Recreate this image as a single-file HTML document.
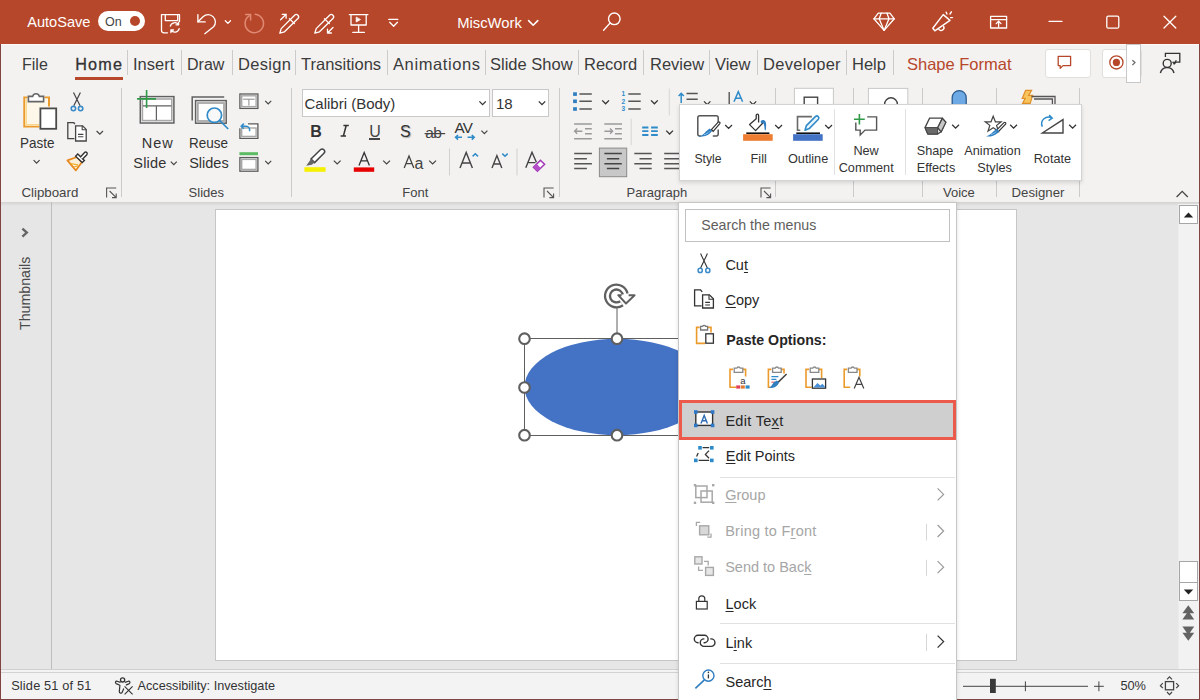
<!DOCTYPE html>
<html><head><meta charset="utf-8">
<style>
*{box-sizing:border-box;margin:0;padding:0}
html,body{width:1200px;height:700px;overflow:hidden;background:#E6E6E6;font-family:"Liberation Sans",sans-serif;position:relative}
.a{position:absolute}
.t{position:absolute;line-height:1;white-space:nowrap}
svg{position:absolute;overflow:visible}
#title{left:0;top:0;width:1200px;height:44px;background:#B7472A}
#tabs{left:0;top:44px;width:1200px;height:158px;background:#F3F2F1}
.tab{color:#3B3B3B;font-size:16px}
.sep{position:absolute;width:1px;background:#CBCBCB}
.lbl{color:#444;font-size:13px}
.rl{color:#333;font-size:13px}
.ml{color:#333;font-size:12.7px}
.mi{color:#262626;font-size:14.5px}
.dis{color:#A6A6A6}
u{text-decoration:underline;text-decoration-thickness:1px;text-underline-offset:2px}
</style></head><body>
<!-- title bar -->
<div id="title" class="a"></div>
<div class="t" style="left:27.2px;top:14.7px;font-size:14.6px;color:#fff">AutoSave</div>
<div class="a" style="left:98px;top:11px;width:47px;height:20px;border-radius:10px;background:#fff"></div>
<div class="t" style="left:105px;top:15.5px;font-size:12.5px;color:#444">On</div>
<div class="a" style="left:130px;top:16px;width:10px;height:10px;border-radius:5px;background:#B7472A"></div>

<svg width="1200" height="44" style="left:0;top:0" fill="none" stroke="#fff" stroke-width="1.3" stroke-linecap="round" stroke-linejoin="round">
 <!-- save -->
 <path d="M167.5 32.8H164a2.5 2.5 0 0 1-2.5-2.5V14.6h18v7"/>
 <path d="M165.3 14.6v6h12.4v-6"/>
 <path d="M170.3 26.2a4.6 4.6 0 0 1 8.2-1.6M178.6 22.2v2.6h-2.6M179.2 28.6a4.6 4.6 0 0 1-8.2 1.6M170.9 32.6V30h2.6"/>
 <!-- undo -->
 <path d="M197.9 14.6v7.3h7.3"/>
 <path d="M198 21.8l5.3-5.3a7.3 7.3 0 0 1 10.3 10.3l-8.8 6.9" />
 <path d="M225.3 20.8l2.6 2.6 2.6-2.6"/>
 <!-- redo faded -->
 <g stroke="#E08A74" stroke-width="1.5">
  <path d="M249.2 15.8a9.2 9.2 0 1 0 6-1.5"/>
  <path d="M245.6 14.6h5v5.3"/>
 </g>
 <!-- pen1 -->
 <path d="M279.8 33.2l1.4-4.6 13.4-13.4a2.3 2.3 0 0 1 3.3 3.3L284.5 31.8z"/>
 <path d="M289.4 18.6l5 5"/>
 <path d="M280.6 19.8l5.5-5.5M282.2 14.3h3.9v3.9"/>
 <!-- pen2 -->
 <path d="M314.8 33.2l1.4-4.6 13.4-13.4a2.3 2.3 0 0 1 3.3 3.3L319.5 31.8z"/>
 <path d="M324.4 18.6l5 5"/>
 <path d="M333 27.5l-5.5 5.5M327.5 29.1v3.9h3.9"/>
 <!-- present -->
 <path d="M349.3 14.6h18.6M351 14.6v10.4h15.2V14.6M358.6 25v7M352.8 32.4h11.6"/>
 <path d="M356.2 17.4v4.6l4-2.3z" fill="#fff" stroke-width="0.8"/>
 <!-- customize -->
 <path d="M388.8 19.4h9M389.7 22.3l3.9 3.9 3.9-3.9"/>
 <!-- misc chevron -->
 <path d="M528.6 20.6l4.6 4.6 4.6-4.6" stroke-width="1.6"/>
 <!-- search -->
 <circle cx="614.3" cy="18.8" r="5.8" stroke-width="1.4"/>
 <path d="M610.2 22.9l-6.6 7.4" stroke-width="1.4"/>
 <!-- diamond -->
 <path d="M878.3 13.2h11.6l4.4 5.6-10.2 11.6-10.2-11.6z"/>
 <path d="M873.9 18.8h20.4M881.2 13.2l-2 5.6 4.9 11.6 4.9-11.6-2-5.6"/>
 <!-- megaphone -->
 <path d="M932.8 28.2l10.4-13.6 6.8 5.8-15.2 10.4z" stroke-width="1.4"/>
 <path d="M938.6 29a2.7 2.7 0 0 0 5-2.6" stroke-width="1.4"/>
 <path d="M946.2 12.2l0.7 1.8M951.4 11.8l-1.4 2.2M950.6 17.6h1.9" stroke-width="1.4"/>
 <!-- ribbon display -->
 <rect x="990.6" y="16.4" width="16" height="11.6"/>
 <path d="M990.6 19.6h16M998.6 27v-5.6M996.2 23.6l2.4-2.4 2.4 2.4"/>
 <!-- min max close -->
 <path d="M1049 21.3h13"/>
 <rect x="1106.8" y="16.2" width="12" height="12" rx="1.5"/>
 <path d="M1164 16.2l11.8 11.8M1175.8 16.2l-11.8 11.8"/>
</svg>
<div class="t" style="left:457.2px;top:16.2px;font-size:14.8px;color:#fff">MiscWork</div>

<!-- tabs + ribbon -->
<div id="tabs" class="a"></div>
<div class="a" style="left:0;top:44px;width:1200px;height:1px;background:#FAFAFA"></div>
<div class="t tab" style="left:22px;top:56.5px">File</div>
<div class="t tab" style="left:75.2px;top:55.8px;color:#333;font-size:16.2px;letter-spacing:1.2px;-webkit-text-stroke:0.3px #333">Home</div>
<div class="a" style="left:75px;top:77px;width:48px;height:3px;background:#B7472A"></div>
<div class="t tab" style="left:133px;top:55.7px;font-size:16.5px">Insert</div>
<div class="t tab" style="left:187px;top:56.5px">Draw</div>
<div class="t tab" style="left:238px;top:55.7px;font-size:16.5px;letter-spacing:0.3px">Design</div>
<div class="t tab" style="left:301px;top:55.7px;font-size:16.5px">Transitions</div>
<div class="t tab" style="left:393px;top:55.7px;font-size:16.5px;letter-spacing:0.6px">Animations</div>
<div class="t tab" style="left:490px;top:55.7px;font-size:16.5px">Slide Show</div>
<div class="t tab" style="left:584px;top:55.7px;font-size:16.5px">Record</div>
<div class="t tab" style="left:650px;top:55.7px;font-size:16.5px">Review</div>
<div class="t tab" style="left:715px;top:55.7px;font-size:16.5px">View</div>
<div class="t tab" style="left:763px;top:55.7px;font-size:16.5px;letter-spacing:0.3px">Developer</div>
<div class="t tab" style="left:852px;top:55.7px;font-size:16.5px">Help</div>
<div class="t tab" style="left:907px;top:55.7px;font-size:16.5px;color:#B7472A">Shape Format</div>
<div class="sep" style="left:127px;top:50px;height:25px"></div>
<div class="sep" style="left:181px;top:50px;height:25px"></div>
<div class="sep" style="left:232px;top:50px;height:25px"></div>
<div class="sep" style="left:295px;top:50px;height:25px"></div>
<div class="sep" style="left:387px;top:50px;height:25px"></div>
<div class="sep" style="left:485px;top:50px;height:25px"></div>
<div class="sep" style="left:578px;top:50px;height:25px"></div>
<div class="sep" style="left:643px;top:50px;height:25px"></div>
<div class="sep" style="left:709px;top:50px;height:25px"></div>
<div class="sep" style="left:757px;top:50px;height:25px"></div>
<div class="sep" style="left:846px;top:50px;height:25px"></div>
<div class="sep" style="left:893px;top:50px;height:25px"></div>


<div class="a" style="left:1044.5px;top:48.5px;width:46px;height:29px;background:#fff;border:1px solid #E1DFDD;border-radius:3px"></div>
<div class="a" style="left:1101.5px;top:48.5px;width:40px;height:29px;background:#fff;border:1px solid #E1DFDD;border-radius:3px"></div>
<div class="a" style="left:1126.3px;top:44px;width:15px;height:38.5px;background:#fff;border:1px solid #C8C8C8"></div>
<svg width="1200" height="700" style="left:0;top:0" fill="none">
 <path d="M1058.2 56.4h12.4v9.2h-7.6l-2.8 2.8v-2.8h-2z" stroke="#B7472A" stroke-width="1.3" stroke-linejoin="round"/>
 <circle cx="1116.4" cy="62.4" r="6.6" stroke="#B7472A" stroke-width="1.3"/>
 <circle cx="1116.4" cy="62.4" r="3.6" fill="#B7472A"/>
 <path d="M1132.4 60.2l2.6 2.4-2.6 2.4" stroke="#666" stroke-width="1.2"/>
 <circle cx="1167.2" cy="63.4" r="4" stroke="#333" stroke-width="1.4"/>
 <path d="M1160.4 73a7 7 0 0 1 13.6 0" stroke="#333" stroke-width="1.4"/>
 <path d="M1165.4 57v-3.6h14.4v8.8h-4l-2 2.2" stroke="#333" stroke-width="1.3"/>
 <path d="M1172.6 61.8l1.4 1.6 2.4-3" stroke="#333" stroke-width="1.3"/>
</svg>
<!-- ribbon group labels -->
<div class="t lbl" style="left:21.4px;top:185.5px;font-size:13.3px">Clipboard</div>
<div class="t lbl" style="left:188.6px;top:185.5px">Slides</div>
<div class="t lbl" style="left:402.3px;top:185.5px">Font</div>
<div class="t lbl" style="left:626.5px;top:185.5px">Paragraph</div>
<div class="t lbl" style="left:943px;top:185.5px">Voice</div>
<div class="t lbl" style="left:1011.6px;top:185.5px;font-size:13.2px">Designer</div>
<div class="sep" style="left:121px;top:88px;height:109px"></div>
<div class="sep" style="left:290.5px;top:88px;height:109px"></div>
<div class="sep" style="left:558.5px;top:88px;height:109px"></div>
<div class="sep" style="left:775px;top:88px;height:109px"></div>
<div class="sep" style="left:852.5px;top:88px;height:109px"></div>
<div class="sep" style="left:922px;top:88px;height:109px"></div>
<div class="sep" style="left:995.5px;top:88px;height:109px"></div>
<div class="sep" style="left:1079px;top:88px;height:109px"></div>

<div class="t rl" style="left:20.4px;top:136.3px;font-size:14.5px;transform-origin:0 0;transform:scaleX(0.93)">Paste</div>
<div class="t rl" style="left:141.8px;top:136.3px;font-size:14.5px;letter-spacing:0.9px">New</div>
<div class="t rl" style="left:133.3px;top:156.4px;font-size:14.5px;letter-spacing:0.2px">Slide</div>
<div class="t rl" style="left:189.3px;top:136.3px;font-size:14.5px;transform-origin:0 0;transform:scaleX(0.93)">Reuse</div>
<div class="t rl" style="left:189.2px;top:156.4px;font-size:14.5px">Slides</div>


<!-- font boxes -->
<div class="a" style="left:301.5px;top:88.5px;width:188px;height:28px;background:#fff;border:1px solid #C8C8C8"></div>
<div class="t" style="left:304.5px;top:95.5px;font-size:15px;color:#333">Calibri (Body)</div>
<div class="a" style="left:492px;top:88.5px;width:57px;height:28px;background:#fff;border:1px solid #C8C8C8"></div>
<div class="t" style="left:496px;top:95.5px;font-size:15px;color:#333">18</div>

<svg width="1200" height="700" style="left:0;top:0" fill="none" stroke-linecap="butt" stroke-linejoin="miter">
 <!-- paste -->
 <path d="M27.5 97.5h-3.2v29h15" stroke="#EB9A2C" stroke-width="2" fill="#FDF3DC"/>
 <path d="M44.5 97.5h4.5v9" stroke="#EB9A2C" stroke-width="2"/>
 <path d="M25.4 98.5h22.6v8H39.5v19H25.4z" fill="#FDF7EA"/>
 <path d="M26.2 99v25.6h13" stroke="#FAD68A" stroke-width="1.4"/>
 <path d="M28.4 101.6v-5.2h4.3a3.4 3.4 0 0 1 6.6 0h4.3v5.2z" stroke="#666" stroke-width="1.6" fill="#fff"/>
 <rect x="40.4" y="108.4" width="15.8" height="20.4" stroke="#4A4A4A" stroke-width="1.8" fill="#fff"/>
 <path d="M33.6 160.2l3 3 3-3" stroke="#444" stroke-width="1.2"/>
 <!-- scissors -->
 <path d="M73.5 92.4l6.6 13.4M80.4 92.4l-6.6 13.4" stroke="#444" stroke-width="1.2"/>
 <circle cx="73.4" cy="108.6" r="2.2" stroke="#3B8BC8" stroke-width="1.6"/>
 <circle cx="80.6" cy="108.6" r="2.2" stroke="#3B8BC8" stroke-width="1.6"/>
 <!-- copy -->
 <path d="M74.4 138.6h-6.6v-16h6l1 1.6" stroke="#444" stroke-width="1.3"/>
 <path d="M75.6 125.8h7l3.6 3.6v11.6H75.6z" stroke="#444" stroke-width="1.3" fill="#fff"/>
 <path d="M82.2 125.8v4h4M78 134.4h5.4M78 136.8h5.4" stroke="#444" stroke-width="1.1"/>
 <path d="M96.6 131l3.2 3.2 3.2-3.2" stroke="#444" stroke-width="1.2"/>
 <!-- format painter -->
 <path d="M67.4 160.4l9.6-3.4 4.8 5.2-6 8.2z" stroke="#E8891E" stroke-width="1.7" stroke-linejoin="round" fill="#FDF0DA"/>
 <path d="M71 163.6l7 1.2M73.4 167l4.6-1" stroke="#F0B030" stroke-width="1.2"/>
 <path d="M75.6 156.2l2.2-2.2 6.6 6.4-2.2 2.2z" stroke="#333" stroke-width="1.4" fill="#fff"/>
 <path d="M80.2 157.2l4.4-4.6a1.5 1.5 0 0 1 2.2 2.1l-4.4 4.6" stroke="#333" stroke-width="1.4" fill="#fff"/>
 <!-- new slide -->
 <rect x="140.3" y="96.6" width="33.6" height="26.4" stroke="#606060" stroke-width="1.5" fill="#fff"/>
 <rect x="142.4" y="99" width="29.4" height="21.6" stroke="#A8A8A8" stroke-width="1.6"/>
 <path d="M143 105.8h28.4M156.4 105.8v14.4" stroke="#606060" stroke-width="1.2"/>
 <path d="M137 98.9h19M146.6 90v18" stroke="#2F9A47" stroke-width="1.6"/>
 <!-- reuse slides -->
 <path d="M192.2 120.6V97h32" stroke="#606060" stroke-width="1.5"/>
 <rect x="195.6" y="100.6" width="30.6" height="22.6" stroke="#606060" stroke-width="1.5" fill="#fff"/>
 <rect x="197.8" y="103" width="26.2" height="18" stroke="#A8A8A8" stroke-width="1.8"/>
 <circle cx="214.4" cy="115.2" r="7.2" stroke="#2F8BC9" stroke-width="1.7" fill="#F8F8F8"/>
 <path d="M219.6 120.4l8.6 8.6" stroke="#2F8BC9" stroke-width="1.7"/>
 <!-- layout -->
 <rect x="239.9" y="94" width="18" height="14.4" stroke="#5A5A5A" stroke-width="1.3" fill="#fff"/>
 <rect x="241.7" y="95.8" width="14.4" height="10.8" stroke="#A8A8A8" stroke-width="1.4"/>
 <path d="M243.2 99.2h11.4M248.9 99.2v6.4" stroke="#8A8A8A" stroke-width="1"/>
 <path d="M265.2 100.8l3 3 3-3" stroke="#444" stroke-width="1.2"/>
 <!-- reset -->
 <path d="M248 123.9h9.9v14.4H239.9v-10" stroke="#5A5A5A" stroke-width="1.3" fill="#fff"/>
 <rect x="241.7" y="128" width="14.4" height="8.4" stroke="#A8A8A8" stroke-width="1.4"/>
 <path d="M249.6 131.2v-1.4a3.6 3.6 0 0 0-3.6-3.6h-4.6M243.8 123.6l-2.6 2.6 2.6 2.6" stroke="#2F8BC9" stroke-width="1.5"/>
 <!-- section -->
 <path d="M239.4 153.7h18.6" stroke="#5DBB63" stroke-width="3"/>
 <rect x="239.9" y="157.6" width="18" height="13.6" stroke="#5A5A5A" stroke-width="1.3" fill="#fff"/>
 <rect x="241.7" y="159.4" width="14.4" height="10" stroke="#A8A8A8" stroke-width="1.4"/>
 <path d="M265.2 160.8l3 3 3-3" stroke="#444" stroke-width="1.2"/>
 <!-- slide chevron -->
 <path d="M170.8 161.6l3 3 3-3" stroke="#444" stroke-width="1.2"/>

 <!-- font box chevrons -->
 <path d="M479.4 101.4l3.2 3.2 3.2-3.2M538.8 101.4l3.2 3.2 3.2-3.2" stroke="#333" stroke-width="1.3"/>
 <!-- ab strike -->
 <path d="M424.6 133.6h20.6" stroke="#444" stroke-width="1.2"/>
 <!-- AV arrows -->
 <path d="M455.6 137.3h6.4M458 135l-2.4 2.3 2.4 2.3M467.6 137.3h6.6M471.8 135l2.4 2.3-2.4 2.3" stroke="#2F8BC9" stroke-width="1.6"/>
 <path d="M481.4 130.6l3 3 3-3" stroke="#444" stroke-width="1.2"/>
 <!-- highlighter -->
 <path d="M304.4 167.2h21.2v4.6h-21.2z" fill="#F5F000"/>
 <path d="M314.6 162.6l-3.6-3.6 9.4-9.2a2.4 2.4 0 0 1 3.5 3.5z" stroke="#444" stroke-width="1.5" fill="#fff"/>
 <path d="M311 159l3.6 3.6-2.8 2.2-5.6 1z" fill="#666"/>
 <path d="M333.8 160.6l3.4 3.4 3.4-3.4" stroke="#444" stroke-width="1.2"/>
 <!-- font color -->
 <path d="M359 165.6l5.2-13.2 5.2 13.2M360.9 160.8h6.6" stroke="#333" stroke-width="1.3"/>
 <path d="M353.8 167.4h20.4v4.4h-20.4z" fill="#E60000"/>
 <path d="M383.2 160.6l3.4 3.4 3.4-3.4" stroke="#444" stroke-width="1.2"/>
 <!-- Aa -->
 <path d="M404.2 168l4.8-12 4.8 12M405.9 163.6h6.2" stroke="#444" stroke-width="1.3"/>
 <path d="M429.2 160.6l3.4 3.4 3.4-3.4" stroke="#444" stroke-width="1.2"/>
 <path d="M449.5 148.5v27M517 148.5v27" stroke="#D0D0D0" stroke-width="1"/>
 <!-- grow -->
 <path d="M460 168l6.2-15.6 6.2 15.6M462.2 163h8" stroke="#444" stroke-width="1.4"/>
 <path d="M472.6 156.4l2.7-2.7 2.7 2.7" stroke="#2F8BC9" stroke-width="1.5"/>
 <!-- shrink -->
 <path d="M492 168l4.9-12.4 4.9 12.4M493.8 164h6.2" stroke="#444" stroke-width="1.4"/>
 <path d="M502.3 153.6l2.7 2.7 2.7-2.7" stroke="#2F8BC9" stroke-width="1.5"/>
 <!-- clear formatting -->
 <path d="M525.8 167.8l6.2-15.6 4.4 10M528 162.6h7.4" stroke="#444" stroke-width="1.4"/>
 <path d="M533.4 167.2l7-6.8 4.2 3.8-7.2 7z" stroke="#A23BB8" stroke-width="1.5" fill="#fff"/>
 <path d="M533.4 167.2l3.4-3.3 3.9 4-3.3 3.3z" fill="#B44DC8"/>
 <!-- dialog launchers -->
 <path d="M106.6 197.6v-9.6h9.6M109.6 191l6.6 6.6M112 197.6h4.2v-4.2" stroke="#555" stroke-width="1.1"/>
 <path d="M544 197.6v-9.6h9.6M547 191l6.6 6.6M549.4 197.6h4.2v-4.2" stroke="#555" stroke-width="1.1"/>
 <path d="M761 197.6v-9.6h9.6M764 191l6.6 6.6M766.4 197.6h4.2v-4.2" stroke="#555" stroke-width="1.1"/>
 <!-- collapse ribbon -->
 <path d="M1176.6 197l5.6-5.6 5.6 5.6" stroke="#444" stroke-width="1.3"/>
</svg>
<div class="t" style="left:310.2px;top:124.2px;font-size:16px;font-weight:bold;color:#333">B</div>
<svg width="1200" height="700" style="left:0;top:0" fill="none"><path d="M343.4 125.5h5.4M340.6 136h5.4M346.2 125.5l-2.8 10.5" stroke="#333" stroke-width="1.5"/></svg>
<div class="t" style="left:369.2px;top:124.2px;font-size:16px;color:#444">U</div>
<div class="a" style="left:368.5px;top:138px;width:11.5px;height:1.5px;background:#444"></div>
<div class="t" style="left:400px;top:124.4px;font-size:16px;color:#333;text-shadow:1px 1px 1px #AAA">S</div>
<div class="t" style="left:425.2px;top:124.6px;font-size:15.5px;color:#444;letter-spacing:-0.6px">ab</div>
<div class="t" style="left:454.4px;top:120.2px;font-size:15.2px;color:#333;letter-spacing:-0.6px">AV</div>
<div class="t" style="left:414.6px;top:155.8px;font-size:16px;color:#444">a</div>


<svg width="1200" height="700" style="left:0;top:0" fill="none">
 <!-- bullets -->
 <g fill="#2F7EC0"><rect x="573.1" y="92.3" width="3.8" height="3.6"/><rect x="573.1" y="99.5" width="3.8" height="3.6"/><rect x="573.1" y="107.2" width="3.8" height="3.6"/></g>
 <path d="M579.4 94h12.4M579.4 101.2h12.4M579.4 108.9h12.4" stroke="#555" stroke-width="1.5"/>
 <path d="M602.2 100.4l3.4 3.4 3.4-3.4M651 100.4l3.4 3.4 3.4-3.4" stroke="#333" stroke-width="1.3"/>
 <path d="M628.3 94h12.4M628.3 101.2h12.4M628.3 108.9h12.4" stroke="#555" stroke-width="1.5"/>
 <path d="M669.3 88.5v27M631.2 118.7v26.5" stroke="#D6D6D6"/>
 <!-- indents -->
 <path d="M574.1 124h17.7M585 128.7h6.8M585 133.8h6.8M574.1 138.8h17.7M574.4 131.2h8M577.2 128.6l-2.6 2.6 2.6 2.6" stroke="#9A9A9A" stroke-width="1.4"/>
 <path d="M604.3 124h17.7M615 128.7h6.8M615 133.8h6.8M604.3 138.8h17.7M604.4 131.2h8M610 128.6l2.6 2.6-2.6 2.6" stroke="#9A9A9A" stroke-width="1.4"/>
 <!-- columns -->
 <path d="M642.2 127.5h6.2M651.1 127.5h6.7M642.2 131.2h6.2M651.1 131.2h6.7M642.2 135h6.2M651.1 135h6.7" stroke="#2F8BC9" stroke-width="1.8"/>
 <path d="M666.2 130.6l3.4 3.4 3.4-3.4" stroke="#333" stroke-width="1.3"/>
 <!-- align -->
 <path d="M574.2 153.5h17.7M574.2 158.7h12.7M574.2 163.7h17.7M574.2 168.6h12.7" stroke="#555" stroke-width="1.5"/>
 <rect x="599.4" y="148.1" width="27.3" height="28.6" fill="#C8C8C8" stroke="#8A8A8A"/>
 <path d="M604.4 153.5h17.4M606.9 158.7h12.3M604.4 163.7h17.4M606.9 168.6h12.3" stroke="#444" stroke-width="1.5"/>
 <path d="M634.3 153.5h17.4M639.5 158.7h12.2M634.3 163.7h17.4M639.5 168.6h12.2" stroke="#555" stroke-width="1.5"/>
 <path d="M664.2 153.5h17.4M664.2 158.7h17.4M664.2 163.7h17.4M664.2 168.6h17.4" stroke="#555" stroke-width="1.5"/>
 <!-- behind toolbar -->
 <path d="M681.2 103v-9.6M678.6 96l2.6-2.6 2.6 2.6" stroke="#2F8BC9" stroke-width="1.5"/>
 <path d="M686.5 93.5h11.2M686.5 99.2h11.2" stroke="#555" stroke-width="1.5"/>
 <path d="M704 101.4l3.2 3.2 3.2-3.2M749.8 101.4l3.2 3.2 3.2-3.2" stroke="#333" stroke-width="1.2"/>
 <path d="M729.2 92v12" stroke="#555" stroke-width="1.4"/>
 <path d="M734 101.7l4.3-10 4.3 10M735.5 98.2h5.6" stroke="#2F8BC9" stroke-width="1.5"/>
 <rect x="794.4" y="88.3" width="39" height="20" fill="#fff" stroke="#C8C8C8"/>
 <rect x="804.2" y="97.2" width="13.4" height="10" stroke="#444" stroke-width="1.4"/>
 <rect x="868.4" y="88.4" width="39.4" height="20" fill="#fff" stroke="#C8C8C8"/>
 <circle cx="891" cy="104.2" r="6.4" stroke="#444" stroke-width="1.4"/>
 <path d="M952.2 104v-6.4a7 7 0 0 1 14 0v6.4" fill="#6DA9E4" stroke="#2C5C8F" stroke-width="1.3"/>
 <path d="M1025.6 90.4h6l-3 5h4l-2.4 8h-7.6l2.6-5h-3z" fill="#F8C45C" stroke="#E0902A" stroke-width="1.2"/>
 <path d="M1031.4 96.5h23.6v8M1034 99h18.4v5" stroke="#555" stroke-width="1.3"/>
</svg>

<div class="t" style="left:621.6px;top:90.2px;font-size:6.5px;font-weight:bold;color:#2F8BC9;line-height:7.6px;white-space:pre">1
2
3</div>
<!-- workspace -->
<div class="a" style="left:0;top:202px;width:1200px;height:467px;background:#E6E6E6"></div>
<div class="a" style="left:0;top:202px;width:1200px;height:4px;background:linear-gradient(#D2D2D2,#E6E6E6)"></div>
<div class="a" style="left:51px;top:202px;width:1px;height:467px;background:#BDBDBD"></div>
<div class="t" style="left:18px;top:329.5px;font-size:14.2px;color:#4A4A4A;transform-origin:0 0;transform:rotate(-90deg)">Thumbnails</div>
<!-- slide -->
<div class="a" style="left:215px;top:209px;width:802px;height:452px;background:#fff;border:1px solid #C6C6C6"></div>


<svg width="1200" height="700" style="left:0;top:0" fill="none">
 <ellipse cx="617" cy="387" rx="92.5" ry="48.3" fill="#4472C4"/>
 <rect x="524.5" y="338.5" width="185" height="97" stroke="#5F5F5F" stroke-width="1"/>
 <path d="M617 308v30" stroke="#5F5F5F" stroke-width="1"/>
 <g stroke="#5F5F5F" stroke-width="2.1" fill="#fff">
  <circle cx="524.5" cy="338.7" r="5.3"/><circle cx="617" cy="338.7" r="5.3"/>
  <circle cx="524.5" cy="387.5" r="5.3"/><circle cx="524.5" cy="435.2" r="5.3"/><circle cx="617" cy="435.2" r="5.3"/>
 </g>
 <path d="M621.6 303.2A8.9 8.9 0 1 1 625.1 294" stroke="#5F5F5F" stroke-width="7.2"/>
 <path d="M621.6 303.2A8.9 8.9 0 1 1 625.3 295.6" stroke="#fff" stroke-width="2.6"/>
 <path d="M618.2 295.2l16.4 0.2-8.6 8.2z" fill="#fff"/>
 <path d="M628.6 295.3h6l-8.6 8.2-7.8-8.3h3.4" stroke="#5F5F5F" stroke-width="1.9" stroke-linejoin="round"/>
 <!-- thumbnails chevron -->
 <path d="M22.4 228.6l4.4 4-4.4 4" stroke="#666" stroke-width="2.4"/>
 <!-- scrollbar -->
 <rect x="1178.5" y="204" width="20.5" height="465" fill="#F2F2F2"/>
 <rect x="1179.5" y="205.5" width="18" height="18" fill="#fff" stroke="#A6A6A6"/>
 <path d="M1183.8 217.4h9.4l-4.7-4.8z" fill="#222"/>
 <rect x="1179.5" y="561.5" width="18" height="21" fill="#fff" stroke="#A6A6A6"/>
 <rect x="1179.5" y="582.5" width="18" height="18" fill="#fff" stroke="#A6A6A6"/>
 <path d="M1183.8 589.6h9.4l-4.7 4.8z" fill="#222"/>
 <path d="M1188.3 605.2L1182.4 613.2h4.4l-4.4 6.4h11.8l-4.4-6.4h4.4z" fill="#636363"/>
 <path d="M1188.3 640.8L1182.4 632.8h4.4l-4.4-6.4h11.8l-4.4 6.4h4.4z" fill="#636363"/>
</svg>
<!-- status bar -->
<div class="a" style="left:0;top:669px;width:1200px;height:31px;background:#F3F3F3;border-top:1px solid #D0D0D0"></div>
<div class="a" style="left:0;top:672px;width:1200px;height:1px;background:#D2D2D2"></div>
<div class="t" style="left:11.2px;top:679.8px;font-size:12.8px;color:#333;letter-spacing:0.15px">Slide 51 of 51</div>
<div class="t" style="left:137.5px;top:679.8px;font-size:12.7px;color:#333">Accessibility: Investigate</div>
<div class="t" style="left:1120.4px;top:680px;font-size:12.8px;color:#333">50%</div>


<svg width="1200" height="700" style="left:0;top:0" fill="none">
 <!-- accessibility -->
 <circle cx="122.6" cy="679.9" r="2.1" stroke="#333" stroke-width="1.3"/>
 <path d="M120.6 682.4l-3.6-1.2a1.3 1.3 0 0 0-0.9 2.4l3.8 1.6-0.6 6.4a1.5 1.5 0 0 0 2.9 0.6l1.6-3.8M124.8 682.4l3.6-1.2a1.3 1.3 0 0 1 0.9 2.4l-3.4 1.5" stroke="#333" stroke-width="1.2" stroke-linejoin="round"/>
 <path d="M124.6 686.4l8 8M132.6 686.4l-8 8" stroke="#333" stroke-width="1.1"/>
 <!-- zoom slider -->
 <path d="M963 686.3h125M1025.4 681.4v9.8M1094 686.3h9.8M1098.9 681.4v9.8" stroke="#444" stroke-width="1"/>
 <rect x="990" y="678.8" width="5.8" height="14.2" fill="#3A3A3A"/>
 <rect x="1165.4" y="681.6" width="8.2" height="8.2" stroke="#444" stroke-width="1.3"/>
 <path d="M1167 679.4l2.5-2.6 2.5 2.6M1167 692l2.5 2.6 2.5-2.6M1162.8 683.2l-2.4 2.5 2.4 2.5M1176.2 683.2l2.4 2.5-2.4 2.5" stroke="#444" stroke-width="1.2"/>
</svg>
<!-- window border -->
<div class="a" style="left:0;top:44px;width:1px;height:656px;background:#824440"></div>
<div class="a" style="left:1199px;top:44px;width:1px;height:656px;background:#824440"></div>
<div class="a" style="left:0;top:699px;width:1200px;height:1px;background:#824440"></div>

<!-- mini toolbar -->
<div class="a" style="left:678.5px;top:103.5px;width:403px;height:77.5px;background:#fff;border:1px solid #D4D4D4;box-shadow:0 2px 4px rgba(0,0,0,0.12)"></div>
<div class="sep" style="left:833.5px;top:109px;height:66px;background:#E1E1E1"></div>
<div class="sep" style="left:904.5px;top:109px;height:66px;background:#E1E1E1"></div>

<svg width="1200" height="700" style="left:0;top:0" fill="none">
 <!-- style -->
 <path d="M701.2 136h-1.4a2 2 0 0 1-2-2V117.7a2 2 0 0 1 2-2h16.4a2 2 0 0 1 2 2v5M718.2 129.6v4.4a2 2 0 0 1-2 2h-3.4" stroke="#555" stroke-width="1.5"/>
 <path d="M711.4 129.6l6.8-7.4a1.1 1.1 0 0 1 1.6 1.5l-6.6 7.6z" stroke="#333" stroke-width="1.2" fill="#fff"/>
 <path d="M698.4 136.8c4.4 0.2 8.8-0.6 11.4-3.2l2.4-2.6-2.6-2.4-3 2.4c-2.6 2.2-3.6 4.4-8.2 5.8z" fill="#2F7EC0"/>
 <path d="M704 134.8c2.2-0.6 4-1.8 5.4-3.4" stroke="#8CC4F0" stroke-width="1"/>
 <path d="M725.2 125l3.4 3.4 3.4-3.4M775.2 125l3.4 3.4 3.4-3.4M825.2 125l3.4 3.4 3.4-3.4" stroke="#333" stroke-width="1.3"/>
 <!-- fill -->
 <path d="M758.6 122.6V115.4a1.2 1.2 0 0 0-2.4 0v3.4l-6.6 5.8 6 6 7.2-7.6" stroke="#333" stroke-width="1.3" fill="#fff" stroke-linejoin="round"/>
 <path d="M760.6 121.2c1.8-1.8 4-1.4 5 0.6 0.8 1.6 0.6 5 0.2 8.4h-1c-0.4-2.6-0.4-5-1.2-6.4-0.6-0.9-1.6-0.9-2.4-0.3z" fill="#2F7EC0"/>
 <path d="M746.3 133.2h23.1" stroke="#111" stroke-width="1.6"/>
 <rect x="743.1" y="134.2" width="29.6" height="6.6" fill="#ED7D31"/>
 <!-- outline -->
 <path d="M811.9 116.6h-14.4v13.6h2.8" stroke="#6A6A6A" stroke-width="1.6"/>
 <path d="M805 130.2l1.4-4.6 9.2-9.2a2 2 0 0 1 2.8 2.8l-9.2 9.4z" stroke="#2F8BC9" stroke-width="1.6" fill="#EAF5FC" stroke-linejoin="round"/>
 <path d="M796.3 133.2h23.7" stroke="#111" stroke-width="1.6"/>
 <rect x="793.1" y="134.2" width="29.6" height="6.6" fill="#4472C4"/>
 <!-- new comment -->
 <path d="M867.2 116.9h9.4v13.2h-11.6l-4.8 5v-5h-4.4v-7.6" stroke="#555" stroke-width="1.4"/>
 <path d="M854 119.2h10.8M859.4 114v10.6" stroke="#2F9A47" stroke-width="1.6"/>
 <path d="M952.2 124.8l3.4 3.4 3.4-3.4M1010.2 124.8l3.4 3.4 3.4-3.4M1069.2 124.8l3.4 3.4 3.4-3.4" stroke="#333" stroke-width="1.3"/>
 <!-- shape effects -->
 <path d="M925 127.6l4.6-9.4h12.6l3.6 4-4.6 9.4-3.6 2.4h-9.8z" fill="#fff" stroke="#444" stroke-width="1.3"/>
 <path d="M925 127.6h12.8l-0.2 6.4h-9.8z" fill="#6A6A6A" stroke="#444" stroke-width="1"/>
 <path d="M937.8 127.6l4.4-9.4M937.8 127.6l3.4 4.4" stroke="#444" stroke-width="1.2"/>
 <path d="M937.8 127.6l4.6-9.2 3.4 4-4.6 9.4z" fill="#C8C8C8" stroke="#444" stroke-width="1.2"/>
 <!-- animation styles -->
 <path d="M993.2 116.2l2.2 5.6h5.8l-4.6 3.6 1.8 5.8-5.2-3.4-5.2 3.4 1.8-5.8-4.6-3.6h5.8z" stroke="#444" stroke-width="1.2" fill="#fff"/>
 <path d="M995.8 130.8l8.2-8.2a1.1 1.1 0 0 1 1.6 1.5l-8 8.4z" stroke="#333" stroke-width="1.2" fill="#fff"/>
 <path d="M986.2 136.4c4.2 0.4 8.4-0.6 10.8-3l2.2-2.4-2.4-2.2-2.8 2.2c-2.4 2-3.6 4-7.8 5.4z" fill="#2F7EC0"/>
 <path d="M991.2 134.6c2-0.6 3.8-1.6 5.2-3.2" stroke="#8CC4F0" stroke-width="1"/>
 <!-- rotate -->
 <path d="M1042.4 126.6a6.6 6.6 0 0 1 9.6-8.4M1049.2 115l3 3.2-3.6 2.4" stroke="#2F8BC9" stroke-width="1.5"/>
 <path d="M1042.4 133h20.6v-13.4z" stroke="#444" stroke-width="1.4"/>
</svg>
<div class="t ml" style="left:694.4px;top:153.0px;font-size:12.2px">Style</div>
<div class="t ml" style="left:750.6px;top:153.0px">Fill</div>
<div class="t ml" style="left:788px;top:153.0px">Outline</div>
<div class="t ml" style="left:853.4px;top:145.4px">New</div>
<div class="t ml" style="left:838.7px;top:161.7px">Comment</div>
<div class="t ml" style="left:916.7px;top:145.4px">Shape</div>
<div class="t ml" style="left:916.7px;top:161.7px">Effects</div>
<div class="t ml" style="left:964.3px;top:145.4px">Animation</div>
<div class="t ml" style="left:977.3px;top:161.7px">Styles</div>
<div class="t ml" style="left:1033.7px;top:153.0px">Rotate</div>

<!-- context menu -->
<div class="a" style="left:678px;top:201.5px;width:279px;height:500px;background:#fff;border:1px solid #C6C6C6;box-shadow:0 0 4px rgba(0,0,0,0.12)"></div>
<div class="a" style="left:685px;top:208.5px;width:265px;height:33px;border:1px solid #C1C1C1"></div>
<div class="t" style="left:701.2px;top:217.8px;font-size:14.2px;color:#605E5C">Search the menus</div>
<div class="t mi" style="left:725.4px;top:257.7px">Cu<u>t</u></div>
<div class="t mi" style="left:725.4px;top:293.4px"><u>C</u>opy</div>
<div class="t mi" style="left:726.3px;top:333.2px;font-weight:bold;font-size:14.2px">Paste Options:</div>
<div class="a" style="left:679px;top:400px;width:277px;height:40px;background:#CFCFCF;border:3px solid #EB5A4B"></div>
<div class="t mi" style="left:725.4px;top:413.7px;letter-spacing:0.3px">Edit Te<u>x</u>t</div>
<div class="t mi" style="left:725.8px;top:449.4px"><u>E</u>dit Points</div>
<div class="a" style="left:720px;top:476.5px;width:235px;height:1px;background:#E1E1E1"></div>
<div class="t mi dis" style="left:725.2px;top:488.2px"><u>G</u>roup</div>
<div class="t mi dis" style="left:725.2px;top:524.3px;letter-spacing:0.25px">Bring to F<u>r</u>ont</div>
<div class="t mi dis" style="left:725.2px;top:560.4px">Send to Bac<u>k</u></div>
<div class="t mi" style="left:725.5px;top:596.5px"><u>L</u>ock</div>
<div class="a" style="left:720px;top:622.5px;width:235px;height:1px;background:#E1E1E1"></div>
<div class="t mi" style="left:725.5px;top:636px">L<u>i</u>nk</div>
<div class="a" style="left:720px;top:662.5px;width:235px;height:1px;background:#E1E1E1"></div>
<div class="t mi" style="left:725.5px;top:674.9px">Searc<u>h</u></div>


<svg width="1200" height="700" style="left:0;top:0" fill="none">
 <!-- cut -->
 <path d="M700.6 253.6l7 14.8M707.4 253.6l-7 14.8" stroke="#333" stroke-width="1.1"/>
 <circle cx="700.2" cy="270.4" r="2.1" stroke="#3B8BC8" stroke-width="1.5"/>
 <circle cx="707.8" cy="270.4" r="2.1" stroke="#3B8BC8" stroke-width="1.5"/>
 <!-- copy -->
 <path d="M701.6 305.8h-7v-16h6l1.6 2" stroke="#333" stroke-width="1.3"/>
 <path d="M702.6 294.8h6.8l4 4v9.2H702.6z" stroke="#333" stroke-width="1.3" fill="#fff"/>
 <path d="M709 294.8v4.4h4.4M705.2 302.4h4.8M705.2 305h4.8" stroke="#333" stroke-width="1.1"/>
 <!-- paste options -->
 <path d="M699.6 327.4h-3v16h8.4M708 327.4h3v5" stroke="#EB9A2C" stroke-width="1.6"/>
 <path d="M700.6 330v-3.6h2a1.6 1.6 0 0 1 3 0h2V330z" stroke="#777" stroke-width="1.3" fill="#fff"/>
 <rect x="705.8" y="333.8" width="7.6" height="9.4" stroke="#333" stroke-width="1.3"/>
 <!-- paste icons -->
 <g stroke-width="1.6">
  <path d="M733 369.4h-3v17.8h6M742.6 369.4h3v7" stroke="#EB9A2C"/>
  <path d="M734.2 372.4v-4.2h2.6a1.8 1.8 0 0 1 3.4 0h2.6v4.2z" stroke="#888" stroke-width="1.3" fill="#fff"/>
  <path d="M771.4 369.4h-3v17.8h2.4M781 369.4h3v4" stroke="#EB9A2C"/>
  <path d="M772.6 372.4v-4.2h2.6a1.8 1.8 0 0 1 3.4 0h2.6v4.2z" stroke="#888" stroke-width="1.3" fill="#fff"/>
  <path d="M809 369.4h-3v17.8h5.6M818.6 369.4h3v8.6" stroke="#EB9A2C"/>
  <path d="M810.2 372.4v-4.2h2.6a1.8 1.8 0 0 1 3.4 0h2.6v4.2z" stroke="#888" stroke-width="1.3" fill="#fff"/>
  <path d="M847.2 369.4h-3v17.8h6M856.8 369.4h3v7" stroke="#EB9A2C"/>
  <path d="M848.4 372.4v-4.2h2.6a1.8 1.8 0 0 1 3.4 0h2.6v4.2z" stroke="#888" stroke-width="1.3" fill="#fff"/>
 </g>
 <text x="740.2" y="383.6" font-family="Liberation Sans" font-size="9.5" fill="#333" stroke="none">a</text>
 <rect x="736.2" y="385.4" width="4" height="3.2" fill="#E0405A"/>
 <rect x="740.8" y="385.4" width="4" height="3.2" fill="#E07A30"/>
 <rect x="745.6" y="385.4" width="4" height="3.2" fill="#2E8BC9"/>
 <path d="M771.4 376.6h7M771.4 379.4h5" stroke="#2F8BC9" stroke-width="1.2"/>
 <path d="M771.4 382.2h4" stroke="#E06070" stroke-width="1.2"/>
 <path d="M778 382.4l8.6-8.4" stroke="#444" stroke-width="1.5"/>
 <path d="M769 387.8c3.4 0.6 6.6-0.4 8.6-2.8l1.6-2.4-2.2-2.2-2.6 1.6c-2.4 1.6-2.2 4.4-5.4 5.8z" fill="#2F7EC0"/>
 <rect x="812.4" y="379" width="13.2" height="9.2" fill="#fff" stroke="#333" stroke-width="1.3"/>
 <path d="M813.4 387.4l4-4.4 3 2.6 2-1.8 2.4 2.4v1.2z" fill="#4A90D9"/>
 <path d="M854.2 388.6l4.8-11.4 4.8 11.4M856 384.4h6" stroke="#444" stroke-width="1.2"/>
 <!-- edit text -->
 <rect x="695.8" y="412" width="16.8" height="13.4" fill="#fff" stroke="#333" stroke-width="1.4"/>
 <g fill="#2E78C8"><rect x="694" y="410.2" width="3.6" height="3.6"/><rect x="710.8" y="410.2" width="3.6" height="3.6"/><rect x="694" y="423.6" width="3.6" height="3.6"/><rect x="710.8" y="423.6" width="3.6" height="3.6"/></g>
 <path d="M701 423.4l3.2-8 3.2 8M702 420.8h4.4" stroke="#2E6DB4" stroke-width="1.4"/>
 <!-- edit points -->
 <g fill="#2E8BC9"><rect x="698.2" y="446" width="3.6" height="3.6"/><rect x="710" y="446" width="3.6" height="3.6"/><rect x="694" y="458.6" width="3.6" height="3.6"/><rect x="710" y="458.6" width="3.6" height="3.6"/></g>
 <path d="M702.6 447.6h6.6M709 450.6l-3.6 3.8 3.6 3.8M698.6 460.4h10.6M696.6 456.6l1.6-3.6" stroke="#333" stroke-width="1.3"/>
 <!-- group -->
 <g stroke="#A8A8A8" stroke-width="1.5">
  <rect x="695.8" y="486" width="11.2" height="11.6"/><rect x="701" y="491" width="11.2" height="11.2"/>
 </g>
 <g fill="#A8A8A8"><rect x="693.8" y="484" width="2.4" height="2.4"/><rect x="712" y="484" width="2.4" height="2.4"/><rect x="693.8" y="501.6" width="2.4" height="2.4"/><rect x="712" y="501.6" width="2.4" height="2.4"/></g>
 <!-- bring to front -->
 <path d="M696.4 526v-3.6h3.8M711 533.6v3.6h-3.8" stroke="#A8A8A8" stroke-width="1.3"/>
 <rect x="699.6" y="525.8" width="9.2" height="9" fill="#D8D8D8" stroke="#A8A8A8" stroke-width="1.4"/>
 <!-- send to back -->
 <rect x="694.8" y="556.8" width="7.2" height="7.2" fill="#E6E6E6" stroke="#A8A8A8" stroke-width="1.4"/>
 <rect x="705.6" y="567.4" width="7.8" height="8" fill="#E6E6E6" stroke="#A8A8A8" stroke-width="1.4"/>
 <path d="M704 561.4h4.2v4M698.6 566.4v4h4.4" stroke="#A8A8A8" stroke-width="1.3"/>
 <!-- lock -->
 <rect x="696.4" y="601.4" width="10.8" height="7.6" stroke="#333" stroke-width="1.2"/>
 <path d="M698.8 601.4v-2.6a3 3 0 0 1 6 0v2.6" stroke="#333" stroke-width="1.2"/>
 <!-- link -->
 <path d="M698.6 642.7h-0.6a3.7 3.7 0 0 1 0-7.4h6.4a3.7 3.7 0 0 1 0 7.4h-0.8" stroke="#333" stroke-width="1.4"/>
 <path d="M704.4 638.9h-0.4a3.75 3.75 0 0 0 0 7.5h7.2a3.75 3.75 0 0 0 0-7.5h-1" stroke="#333" stroke-width="1.4"/>
 <!-- search -->
 <circle cx="708.4" cy="675.6" r="5.6" stroke="#2F7EC0" stroke-width="1.4"/>
 <path d="M704.4 679.8l-9 8.6" stroke="#2F7EC0" stroke-width="1.6"/>
 <path d="M708.4 674.4v4" stroke="#333" stroke-width="1.3"/>
 <circle cx="708.4" cy="672.4" r="0.8" fill="#333"/>
 <!-- submenu arrows -->
 <path d="M937.6 488.4l6 6-6 6M937.6 525l6 6-6 6M937.6 561.2l6 6-6 6" stroke="#9A9A9A" stroke-width="1.2"/>
 <path d="M937.6 635.6l6 6-6 6" stroke="#333" stroke-width="1.3"/>
 <path d="M926.5 523.8v16.6M926.5 559.8v16M926.5 633.8v17.2" stroke="#D6D6D6"/>
</svg>
</body></html>
